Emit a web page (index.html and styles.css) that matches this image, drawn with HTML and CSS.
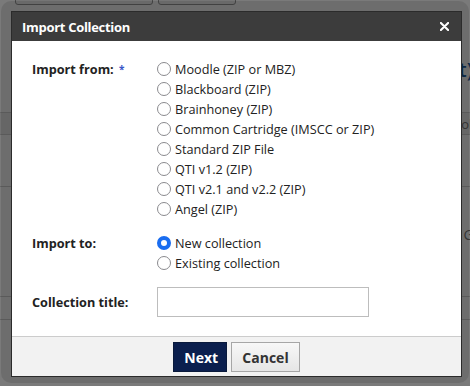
FILE: index.html
```html
<!DOCTYPE html>
<html lang="en">
<head>
	<meta charset="UTF-8">
	<title>Import Collection</title>
	<link rel="stylesheet" href="styles.css">
</head>
<body>
<div class="page">
	<div class="page-toolbar">
		<span class="page-btn page-btn-wide"></span>
		<span class="page-btn"></span>
	</div>
	<h1 class="page-heading">(Default)</h1>
	<div class="page-table">
		<div class="page-row page-row-head">Books</div>
		<div class="page-row page-row-mid"></div>
		<div class="page-row page-row-tall">Go</div>
		<div class="page-row"></div>
	</div>
</div>

<div class="overlay"></div>

<div class="dialog-frame">
	<div class="dialog">
		<div class="dialog-title">
			<span>Import Collection</span>
			<svg class="dialog-close" width="9" height="9" viewBox="0 0 10 10">
				<path d="M1 1 L9 9 M9 1 L1 9" stroke="#ffffff" stroke-width="2.3" stroke-linecap="round"/>
			</svg>
		</div>
		<div class="dialog-body">
			<div class="form-row">
				<div class="form-label">Import from: <span class="required">*</span></div>
				<div class="radio-list">
					<label class="radio"><input type="radio" name="from"> Moodle (ZIP or MBZ)</label>
					<label class="radio"><input type="radio" name="from"> Blackboard (ZIP)</label>
					<label class="radio"><input type="radio" name="from"> Brainhoney (ZIP)</label>
					<label class="radio"><input type="radio" name="from"> Common Cartridge (IMSCC or ZIP)</label>
					<label class="radio"><input type="radio" name="from"> Standard ZIP File</label>
					<label class="radio"><input type="radio" name="from"> QTI v1.2 (ZIP)</label>
					<label class="radio"><input type="radio" name="from"> QTI v2.1 and v2.2 (ZIP)</label>
					<label class="radio"><input type="radio" name="from"> Angel (ZIP)</label>
				</div>
			</div>
			<div class="form-row">
				<div class="form-label">Import to:</div>
				<div class="radio-list">
					<label class="radio"><input type="radio" name="to" checked> New collection</label>
					<label class="radio"><input type="radio" name="to"> Existing collection</label>
				</div>
			</div>
			<div class="form-row form-row-input">
				<div class="form-label">Collection title:</div>
				<input class="text-input" type="text">
			</div>
		</div>
		<div class="dialog-footer">
			<button class="btn btn-primary">Next</button>
			<button class="btn">Cancel</button>
		</div>
	</div>
</div>
</body>
</html>
```

FILE: styles.css
```css
* {
	margin: 0;
	padding: 0;
	box-sizing: border-box;
}

body {
	width: 470px;
	height: 386px;
	overflow: hidden;
	background: #ffffff;
	font-family: "Open Sans", "Liberation Sans", sans-serif;
	font-size: 12.7px;
	color: #222222;
}

/* page behind the modal */
.page {
	width: 470px;
}

.page-toolbar {
	display: flex;
	gap: 5px;
	margin-top: -25px;
	padding-left: 15px;
}

.page-btn {
	width: 78px;
	height: 30px;
	border: 1px solid #999999;
	border-radius: 3px;
	background: #f4f4f4;
}

.page-btn-wide {
	width: 138px;
}

.page-heading {
	margin-top: 50px;
	margin-right: -3px;
	text-align: right;
	font-size: 20px;
	font-weight: 600;
	color: #1d5ba0;
	line-height: 30px;
}

.page-table {
	margin-top: 27px;
}

.page-row {
	height: 23px;
	border-bottom: 1px solid #d4d4d4;
	text-align: right;
	margin-right: -12px;
	line-height: 22px;
	color: #777777;
	font-size: 13px;
}

.page-row-head {
	border-top: 1px solid #d4d4d4;
	background: #eeeeee;
}

.page-row-mid {
	height: 52px;
}

.page-row-tall {
	height: 110px;
	padding-top: 38px;
	line-height: 20px;
	font-size: 14px;
}

.overlay {
	position: absolute;
	left: 0;
	top: 0;
	width: 470px;
	height: 386px;
	background: rgba(0, 0, 0, 0.52);
}

/* modal */
.dialog-frame {
	position: absolute;
	left: 1px;
	top: 1px;
	width: 468px;
	height: 382px;
	padding: 10px 7px 6px 10px;
	border-radius: 10px;
	background: rgba(0, 0, 0, 0.1);
}

.dialog {
	height: 100%;
	display: flex;
	flex-direction: column;
	background: #ffffff;
	border: 1px solid #2b2b2b;
}

.dialog-title {
	height: 29px;
	display: flex;
	align-items: center;
	justify-content: space-between;
	padding: 0 12px 0 10px;
	background: #3c3c3c;
	color: #ffffff;
	font-weight: 700;
	font-size: 13px;
	letter-spacing: -0.3px;
}

.dialog-body {
	flex: 1;
	padding: 18px 20px 0 20px;
}

.form-row {
	display: flex;
	margin-bottom: 14px;
}

.form-label {
	width: 125px;
	flex-shrink: 0;
	font-weight: 700;
	line-height: 20px;
}

.required {
	margin-left: 2px;
	color: #3a56c8;
	font-size: 10px;
	vertical-align: top;
}

.radio-list {
	display: flex;
	flex-direction: column;
}

.radio {
	display: flex;
	align-items: center;
	height: 20px;
	color: #222222;
}

.radio input {
	appearance: none;
	-webkit-appearance: none;
	width: 14px;
	height: 14px;
	margin-right: 4px;
	border: 1px solid #8a8a8e;
	border-radius: 50%;
	background: #ffffff;
}

.radio input:checked {
	border: 4px solid #1a6df0;
	background: #ffffff;
}

.form-row-input {
	align-items: center;
	margin-top: 13px;
}

.text-input {
	width: 212px;
	height: 30px;
	border: 1px solid #bdbdbd;
	background: #ffffff;
}

.dialog-footer {
	height: 40px;
	display: flex;
	justify-content: center;
	gap: 4px;
	padding-top: 5px;
	border-top: 1px solid #cccccc;
	background: #f2f2f2;
}

.btn {
	height: 30px;
	padding: 0 10px;
	font-family: "Open Sans", "Liberation Sans", sans-serif;
	font-size: 14px;
	font-weight: 700;
	color: #333333;
	border: 1px solid #a6a6a6;
	background: linear-gradient(#f7f7f7, #e6e6e6);
}

.btn-primary {
	width: 54px;
	color: #ffffff;
	border-color: #0a1a3c;
	background: #0b1f4e;
}
```
